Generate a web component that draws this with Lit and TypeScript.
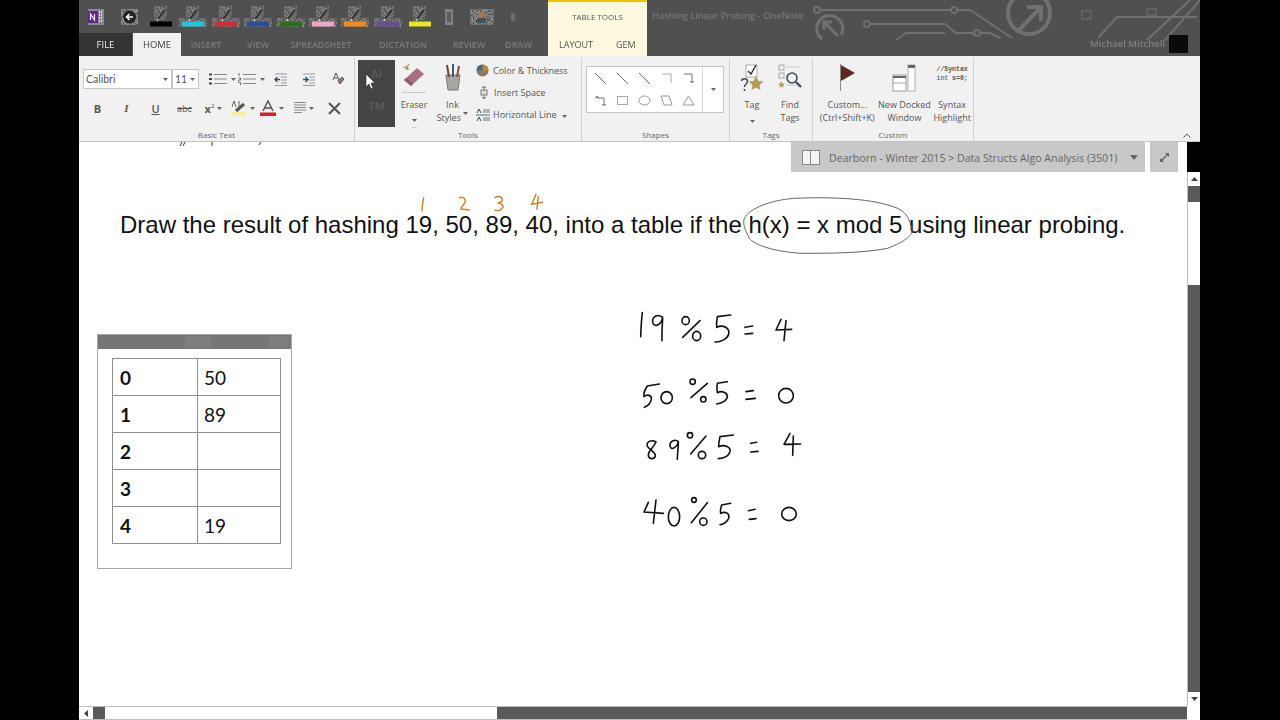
import { LitElement, css, html, svg } from 'lit';
import { customElement } from 'lit/decorators.js';

const PENS = [
  { color: '#000000', edge: false },
  { color: '#25c3de', edge: true },
  { color: '#c92f3a', edge: true },
  { color: '#2b4f96', edge: true },
  { color: '#2f6b1f', edge: true },
  { color: '#eca6c6', edge: true },
  { color: '#f08a1c', edge: true },
  { color: '#6a4f8f', edge: true },
  { color: '#e8e81e', edge: false },
];

const GHOST_TABS = [
  { label: 'INSERT', width: 50 },
  { label: 'VIEW', width: 54 },
  { label: 'SPREADSHEET', width: 72 },
  { label: 'DICTATION', width: 92 },
  { label: 'REVIEW', width: 40 },
  { label: 'DRAW', width: 59 },
];

const HASH_ROWS = [
  ['0', '50'],
  ['1', '89'],
  ['2', ''],
  ['3', ''],
  ['4', '19'],
];

const caret = html`<svg class="caret" width="5" height="3" viewBox="0 0 5 3"><path d="M0 0h5L2.500 3z" fill="#666" /></svg>`;

const pen = (color: string, edge: boolean) => html`
  <svg width="30" height="22" viewBox="0 0 30 22">
    <g opacity=".45">
      <path d="M8 0h13v14H8z" fill="#999" filter="url(#grain)" />
      ${edge ? svg`<rect x="1" y="12" width="28" height="9" fill="#999" filter="url(#grain)" />` : ''}
    </g>
    <path d="M12 13l7-9" stroke="#2e2e2e" stroke-width="1.800" />
    <path d="M12 13l-1 2" stroke="#ddd" stroke-width="1.200" />
    <rect x="4" y="15.500" width="22" height="5" fill=${color} />
  </svg>
`;

// hand written working on the right of the page, coordinates at 3x
const INK = [
  'M67 38C64 60 63 85 62 110',
  'M128 52C112 40 96 50 98 66C100 82 122 80 128 52C127 80 125 100 126 122',
  'M240 62L188 112M332 45L292 50C290 62 289 72 290 82C310 72 330 85 326 102C322 118 300 127 285 126',
  'M375 82L398 78M375 102L398 100M483 58L468 90L515 88M498 62L492 122',
  'M118 252L82 258C74 270 70 280 72 290C82 282 96 285 94 298C92 310 82 318 73 322',
  'M262 250L213 293M322 245L292 250C290 260 290 268 292 278C308 270 324 280 322 292C318 305 305 310 290 312',
  'M378 275L400 272M378 298L406 295',
  'M108 426C95 418 78 425 82 438C86 450 108 455 106 468C102 480 85 478 85 465C85 450 100 445 108 426',
  'M175 425C165 415 148 425 150 438C152 452 170 445 175 425C175 445 172 460 172 478',
  'M258 408L212 462M340 405L300 410C298 420 296 430 296 440C315 432 333 442 330 455C326 468 310 475 295 476',
  'M392 430L410 427M392 456L414 454M510 400L492 433L542 432M520 408L518 466',
  'M85 607L72 636L130 640M108 600L100 670',
  'M262 608L214 668M332 610L305 615C302 625 300 632 302 640C318 632 330 642 326 655C320 668 312 672 300 674',
  'M385 632L405 628M388 658L408 656',
];

const INK_LOOPS = [
  [197, 62, 11, 12], [230, 108, 12, 14],
  [140, 293, 17, 18], [218, 245, 8, 8], [250, 298, 8, 8], [498, 287, 22, 22],
  [210, 406, 8, 8], [246, 465, 11, 11],
  [162, 650, 17, 28], [222, 600, 7, 7], [250, 665, 11, 11], [507, 642, 22, 20],
];

@customElement('app-root')
export class AppRoot extends LitElement {
  static styles = css`
    :host {
      background: #000;
      display: block;
      font-family: 'Open Sans', 'Liberation Sans', sans-serif;
      height: 720px;
      overflow: hidden;
      width: 1280px;
    }

    .window {
      display: flex;
      filter: blur(0.3px);
      flex-direction: column;
      height: 720px;
      margin-left: 79px;
      width: 1121px;
    }

    .defs {
      height: 0;
      position: absolute;
      width: 0;
    }

    /* title bar */
    .titlebar {
      background: #505050;
      display: flex;
      flex: none;
      height: 56px;
    }

    .title-left {
      display: flex;
      flex-direction: column;
      width: 469px;
    }

    .qat {
      align-items: center;
      display: flex;
      height: 33px;
      padding-left: 8px;
    }

    .qat svg {
      flex: none;
    }

    .pens {
      display: flex;
      gap: 2.400px;
      margin-left: 7px;
      margin-top: 1px;
    }

    .tabs {
      display: flex;
      height: 23px;
    }

    .tab {
      align-items: center;
      display: flex;
      font-size: 9.500px;
      justify-content: center;
    }

    .tab-file {
      background: #333;
      color: #eee;
      margin-right: 1px;
      width: 53px;
    }

    .tab-home {
      background: #f1f1f1;
      color: #444;
      width: 48px;
    }

    .tab-ghost {
      color: #7a7a7a;
      font-size: 9px;
      font-weight: 600;
      white-space: nowrap;
    }

    .table-tools {
      background: #fdf9df;
      border-top: 2px solid #e6c700;
      color: #555;
      display: flex;
      flex-direction: column;
      width: 99px;
    }

    .table-tools-title {
      font-size: 8px;
      height: 29px;
      line-height: 29px;
      text-align: center;
    }

    .table-tools-tabs {
      display: flex;
      font-size: 9px;
      padding-top: 7px;
    }

    .table-tools-tabs span:first-child {
      margin-left: 11px;
      margin-right: 23px;
    }

    .title-deco {
      flex: 1;
      position: relative;
    }

    .title-deco svg {
      inset: 0;
      position: absolute;
    }

    .doc-title {
      color: #808080;
      font-size: 9.500px;
      left: 5px;
      position: absolute;
      top: 9px;
      white-space: nowrap;
    }

    .account {
      color: #808080;
      font-size: 9.500px;
      font-weight: 600;
      position: absolute;
      right: 35px;
      top: 37px;
    }

    .account-pic {
      background: #0a0a0a;
      height: 18px;
      position: absolute;
      right: 12px;
      top: 35px;
      width: 19px;
    }

    /* ribbon */
    .ribbon {
      background: #f1f1f1;
      border-bottom: 1px solid #c4c4c4;
      box-sizing: border-box;
      color: #555;
      display: flex;
      flex: none;
      font-size: 9px;
      height: 86px;
      position: relative;
    }

    .group {
      border-right: 1px solid #d0d0d0;
      box-sizing: border-box;
      display: flex;
      flex-direction: column;
      height: 84px;
      margin-top: 2px;
    }

    .group-body {
      display: flex;
      flex: none;
      height: 71px;
    }

    .group-label {
      color: #666;
      font-size: 8px;
      height: 13px;
      line-height: 12px;
      text-align: center;
    }

    .basic {
      width: 276px;
    }

    .tools {
      width: 227px;
    }

    .shapes {
      width: 148px;
    }

    .tags {
      width: 83px;
    }

    .custom {
      width: 161px;
    }

    .basic-body {
      box-sizing: border-box;
      flex-direction: column;
      padding: 11px 0 0 4px;
    }

    .font-row {
      align-items: center;
      display: flex;
      height: 20px;
    }

    .combo {
      align-items: center;
      background: #fff;
      border: 1px solid #c6c6c6;
      box-sizing: border-box;
      color: #555;
      display: flex;
      font-family: 'Lato', sans-serif;
      font-size: 10.500px;
      height: 20px;
      justify-content: space-between;
      padding: 0 3px 0 2px;
    }

    .combo-font {
      width: 91px;
    }

    .combo-size {
      margin-right: 8px;
      width: 27px;
    }

    .mini {
      align-items: center;
      display: flex;
      gap: 3px;
      justify-content: center;
    }

    .format-row {
      display: grid;
      grid-template-columns: repeat(9, 29px);
      margin-top: 10px;
    }

    .format-row .mini {
      color: #555;
      font-size: 11px;
      font-weight: 700;
      height: 18px;
    }

    .lasso {
      align-items: center;
      background: #444;
      box-sizing: border-box;
      color: #595959;
      display: flex;
      flex-direction: column;
      font-size: 11px;
      font-weight: 700;
      gap: 17px;
      height: 67px;
      margin: 2px 2px 0 3px;
      padding-top: 6px;
      width: 37px;
    }

    .big {
      align-items: center;
      display: flex;
      flex-direction: column;
      line-height: 13px;
      padding-top: 5px;
      text-align: center;
      white-space: nowrap;
    }

    .big svg {
      flex: none;
      margin-bottom: 6px;
    }

    .eraser {
      width: 34px;
    }

    .eraser svg {
      border-bottom: 1px solid #c8c8c8;
      margin-bottom: 5px;
      padding-bottom: 5px;
    }

    .inkstyles {
      margin-left: 3px;
      width: 37px;
    }

    .ink-label {
      margin-top: 1px;
    }

    .ink-options {
      display: flex;
      flex-direction: column;
      gap: 5px;
      margin-left: 5px;
      padding-top: 4px;
    }

    .ink-option {
      align-items: center;
      display: flex;
      gap: 4px;
      height: 17px;
      white-space: nowrap;
    }

    .gallery {
      background: #fff;
      border: 1px solid #c6c6c6;
      box-sizing: border-box;
      display: flex;
      height: 47px;
      margin: 8px 0 0 4px;
      width: 138px;
    }

    .gallery-grid {
      display: grid;
      flex: 1;
      grid-template-columns: repeat(5, 1fr);
      padding: 1px 2px;
    }

    .gallery-grid svg {
      margin: auto;
    }

    .gallery-more {
      align-items: center;
      border-left: 1px solid #d8d8d8;
      display: flex;
      justify-content: center;
      width: 20px;
    }

    .tag-btn {
      width: 38px;
    }

    .tags-body {
      padding-left: 3px;
    }

    .custom-body {
      padding-left: 4px;
    }

    .custom-body .big:nth-child(1) {
      width: 61px;
    }

    .custom-body .big:nth-child(2) {
      width: 54px;
    }

    .custom-body .big:nth-child(3) {
      width: 42px;
    }

    .syntax {
      box-sizing: border-box;
      color: #555;
      font-family: 'Liberation Mono', monospace;
      font-size: 6.500px;
      font-weight: 700;
      height: 29px;
      line-height: 9px;
      margin-bottom: 6px;
      padding-top: 2px;
      text-align: left;
    }

    .syntax b {
      color: #6e7fa8;
    }

    .collapse {
      bottom: 3px;
      position: absolute;
      right: 9px;
    }

    .cursor {
      left: 286px;
      position: absolute;
      top: 17px;
    }

    /* page */
    .stage {
      display: grid;
      flex: 1;
      grid-template-columns: 1fr 13px;
      grid-template-rows: 1fr 14px;
      min-height: 0;
    }

    .page {
      background: #fff;
      overflow: hidden;
      position: relative;
    }

    .notebook {
      align-items: center;
      background: #c8c8c8;
      color: #666;
      display: flex;
      font-size: 10.600px;
      height: 30px;
      left: 712px;
      position: absolute;
      top: 0;
      width: 354px;
    }

    .notebook svg:first-child {
      margin: 0 9px 0 11px;
    }

    .notebook span {
      padding-top: 1px;
      white-space: nowrap;
      width: 293px;
    }

    .expand {
      align-items: center;
      background: #c8c8c8;
      display: flex;
      height: 30px;
      justify-content: center;
      left: 1071px;
      position: absolute;
      top: 0;
      width: 28px;
    }

    .question {
      color: #111;
      font-family: 'Liberation Sans', Arial, sans-serif;
      font-size: 24px;
      left: 41px;
      line-height: 26px;
      position: absolute;
      top: 70px;
      white-space: nowrap;
    }

    .overlay {
      position: absolute;
    }

    .note {
      background: #fff;
      border: 1px solid #a8a8a8;
      box-sizing: border-box;
      height: 235px;
      left: 18px;
      position: absolute;
      top: 192px;
      width: 195px;
    }

    .note-head {
      background: #767676;
      display: flex;
      gap: 58px;
      height: 14px;
      justify-content: flex-end;
      padding-right: 2px;
    }

    .note-head i {
      background: #7e7e7e;
      display: block;
      height: 12px;
      margin-top: 1px;
    }

    .note-head i:first-child {
      width: 26px;
    }

    .note-head i:last-child {
      width: 20px;
    }

    table {
      border-collapse: collapse;
      font-family: 'Lato', 'Liberation Sans', sans-serif;
      font-size: 19px;
      margin: 9px 0 0 14px;
      table-layout: fixed;
      width: 169px;
    }

    td {
      border: 1px solid #8e8e8e;
      box-sizing: border-box;
      color: #111;
      height: 37px;
      padding: 0 0 0 6px;
    }

    td:first-child {
      font-weight: 700;
      padding-left: 7px;
      width: 85px;
    }

    /* scrollbars */
    .vbar {
      background: #fff;
      border-left: 1px solid #bdbdbd;
      box-sizing: border-box;
      display: flex;
      flex-direction: column;
      margin-top: 30px;
    }

    .vbar-btn {
      align-items: center;
      display: flex;
      flex: none;
      height: 14px;
      justify-content: center;
    }

    .thumb {
      background: #5a5a5a;
      flex: none;
    }

    .vbar-top {
      height: 16px;
    }

    .vbar-gap {
      flex: none;
      height: 83px;
    }

    .vbar-rest {
      flex: 1;
    }

    .hbar {
      background: #fff;
      border-bottom: 1px solid #bdbdbd;
      border-top: 1px solid #bdbdbd;
      box-sizing: border-box;
      display: flex;
    }

    .hbar-btn {
      align-items: center;
      display: flex;
      flex: none;
      justify-content: center;
      width: 14px;
    }

    .hbar-left {
      flex: none;
      width: 12px;
    }

    .hbar-gap {
      flex: none;
      width: 392px;
    }

    .hbar-rest {
      flex: 1;
    }

    .corner {
      background: #fff;
    }
  `;

  private renderTitleBar() {
    return html`
      <div class="titlebar">
        <div class="title-left">
          <div class="qat">
            <svg width="18" height="18" viewBox="0 0 18 18">
              <rect x="1" y="1" width="16" height="16" fill="#8d8794" />
              <rect x="1" y="3" width="10" height="12" fill="#5b2b7d" />
              <path d="M3.500 12V6l4 6V6" stroke="#f0e8f4" stroke-width="1.200" fill="none" />
              <path d="M12.500 3v12M14.500 3v12" stroke="#ddd" stroke-dasharray="2 1" />
            </svg>
            <svg style="margin-left:15px" width="19" height="18" viewBox="0 0 19 18">
              <rect x="1" y="1" width="17" height="16" fill="#aaa" filter="url(#grain)" opacity=".7" />
              <circle cx="9.500" cy="9" r="6.500" fill="#222" />
              <path d="M13 9H7M9.500 6L6.500 9l3 3" stroke="#fff" stroke-width="1.500" fill="none" />
            </svg>
            <div class="pens">${PENS.map((p) => pen(p.color, p.edge))}</div>
            <svg style="margin-left:8px" width="12" height="18" viewBox="0 0 12 18">
              <rect x="2" y="1" width="8" height="16" fill="#808080" />
              <rect x="4" y="4" width="4" height="10" fill="#5c5c5c" />
            </svg>
            <svg style="margin-left:14px" width="26" height="20" viewBox="0 0 26 20">
              <rect x="1" y="2" width="24" height="16" fill="#999" filter="url(#grain)" opacity=".6" />
              <circle cx="12" cy="8" r="3" fill="#a8744a" />
              <rect x="8" y="11" width="9" height="5" fill="#44505c" />
            </svg>
            <svg style="margin-left:14px" width="8" height="10" viewBox="0 0 8 10">
              <rect x="2" y="1" width="4" height="8" fill="#6c6c6c" />
            </svg>
          </div>
          <div class="tabs">
            <div class="tab tab-file">FILE</div>
            <div class="tab tab-home">HOME</div>
            ${GHOST_TABS.map(
              (t) => html`<div class="tab tab-ghost" style="width:${t.width}px">${t.label}</div>`,
            )}
          </div>
        </div>
        <div class="table-tools">
          <div class="table-tools-title">TABLE TOOLS</div>
          <div class="table-tools-tabs"><span>LAYOUT</span><span>GEM</span></div>
        </div>
        <div class="title-deco">
          <svg width="553" height="56" viewBox="647 0 553 56" fill="none" stroke="#707070" stroke-width="2">
            <circle cx="817" cy="10" r="3" />
            <path d="M820 10H951" />
            <circle cx="954" cy="10" r="3" />
            <path d="M957 10H970L1012 38" />
            <circle cx="867" cy="24" r="3" />
            <path d="M870 24H945L956 33H974" />
            <circle cx="977" cy="33" r="3" />
            <path d="M980 33H990L1000 38" />
            <path d="M896 40L906 33H945" />
            <path d="M841 35A13 13 0 1 0 822 39" stroke-width="3" />
            <path d="M838 36L824 22M824 30V22H832" stroke-width="3" />
            <circle cx="1029" cy="13" r="21" stroke-width="4" />
            <path d="M1019 30L1040 8M1027 7H1041V21" stroke-width="4" />
            <path d="M1098 38L1117 17H1197M1147 40L1190 0M1165 40L1200 0" />
            <rect x="1082" y="11" width="9" height="8" stroke-width="1" />
            <rect x="1147" y="9" width="9" height="6" stroke-width="1" />
          </svg>
          <div class="doc-title">Hashing Linear Probing - OneNote</div>
          <div class="account">Michael Mitchell</div>
          <div class="account-pic"></div>
        </div>
      </div>
    `;
  }

  private renderBasicText() {
    return html`
      <div class="group basic">
        <div class="group-body basic-body">
          <div class="font-row">
            <div class="combo combo-font">Calibri ${caret}</div>
            <div class="combo combo-size">11 ${caret}</div>
            <div class="mini" style="width:31px">
              <svg width="20" height="14" viewBox="0 0 20 14" stroke="#888" fill="none">
                <path d="M6 2.500h13M6 7h13M6 11.500h13" />
                <path d="M1 2.500h3M1 7h3M1 11.500h3" stroke="#444" stroke-width="2" />
              </svg>
              ${caret}
            </div>
            <div class="mini" style="width:30px">
              <svg width="20" height="14" viewBox="0 0 20 14" stroke="#888" fill="none">
                <path d="M6 2.500h13M6 7h13M6 11.500h13" />
                <path d="M2 1v3M1.500 6h2v2h-2v1.500M1.500 10.500h2v2.500" stroke="#667" />
              </svg>
              ${caret}
            </div>
            <div class="mini" style="width:30px">
              <svg width="14" height="13" viewBox="0 0 14 13" stroke="#999" fill="none">
                <path d="M1 1h12M7 4h6M7 7h6M7 10h6M1 12.500h12" />
                <path d="M6 6.500H1M3.500 4L1 6.500 3.500 9" stroke="#33506a" stroke-width="1.300" />
              </svg>
            </div>
            <div class="mini" style="width:28px">
              <svg width="14" height="13" viewBox="0 0 14 13" stroke="#999" fill="none">
                <path d="M1 1h12M7 4h6M7 7h6M7 10h6M1 12.500h12" />
                <path d="M1 6.500h5M3.500 4L6 6.500 3.500 9" stroke="#33506a" stroke-width="1.300" />
              </svg>
            </div>
            <div class="mini" style="width:32px">
              <svg width="13" height="14" viewBox="0 0 13 14" fill="none" stroke="#555">
                <path d="M1 8L4 1l3 7M2 6h4" />
                <path d="M6 9l4-4 2 2-4 5z" fill="#a07a88" />
              </svg>
            </div>
          </div>
          <div class="format-row">
            <div class="mini">B</div>
            <div class="mini" style="font-family:'Liberation Serif',serif;font-style:italic">I</div>
            <div class="mini" style="font-weight:600;text-decoration:underline">U</div>
            <div class="mini" style="font-size:9px;font-weight:400;text-decoration:line-through">abc</div>
            <div class="mini">
              <span>x<sup style="font-size:6px;font-weight:400">2</sup></span>${caret}
            </div>
            <div class="mini">
              <svg width="17" height="16" viewBox="0 0 17 16" fill="none">
                <rect x="1" y="12" width="15" height="4" fill="#f3f29a" />
                <path d="M6 11l8-7" stroke="#555" stroke-width="3" />
                <path d="M2 7L4 1l2 6M9 1v6" stroke="#666" />
              </svg>
              ${caret}
            </div>
            <div class="mini">
              <svg width="16" height="16" viewBox="0 0 16 16" fill="none">
                <path d="M3 11L8 1l5 10M4.500 8h7" stroke="#555" stroke-width="1.500" />
                <rect y="12.500" width="16" height="3.500" fill="#dd1c22" />
              </svg>
              ${caret}
            </div>
            <div class="mini" style="padding-left:6px">
              <svg width="12" height="14" viewBox="0 0 12 14" stroke="#888"><path d="M0 1.500h12M0 4h12M0 6.500h12M0 9h12M0 11.500h8" /></svg>
              ${caret}
            </div>
            <div class="mini" style="padding-left:10px">
              <svg width="13" height="13" viewBox="0 0 13 13" stroke="#555" stroke-width="2"><path d="M1 1l11 11M12 1L1 12" /></svg>
            </div>
          </div>
        </div>
        <div class="group-label">Basic Text</div>
      </div>
    `;
  }

  private renderTools() {
    return html`
      <div class="group tools">
        <div class="group-body">
          <div class="lasso">
            <span>AI</span>
            <span>TM</span>
          </div>
          <div class="big eraser">
            <svg width="24" height="24" viewBox="0 0 24 24">
              <path d="M2 17L15 5l7 6-13 12z" fill="#a86f84" />
              <path d="M2 17l7 6 2-2-7-6z" fill="#8c5a6c" />
              <path d="M4 2l2 5M1 4l6 2M7 1L4 7" stroke="#8a9a4a" />
            </svg>
            Eraser<span style="margin-top:8px">${caret}</span>
          </div>
          <div class="big inkstyles">
            <svg width="18" height="28" viewBox="0 0 18 28" fill="none">
              <path d="M2 12h14l-2 15H4z" fill="#a8a8a0" stroke="#777" />
              <path d="M5 14L3 2" stroke="#6a4a30" stroke-width="2" />
              <path d="M9 14V1" stroke="#3a5a7a" stroke-width="2" />
              <path d="M13 14l2-11" stroke="#8a5030" stroke-width="2" />
            </svg>
            <span class="ink-label">Ink</span>
            <span>Styles ${caret}</span>
          </div>
          <div class="ink-options">
            <div class="ink-option">
              <svg width="13" height="13" viewBox="0 0 13 13">
                <circle cx="6.500" cy="6.500" r="6" fill="#8a7a68" />
                <path d="M6.500 6.500V.5A6 6 0 0 1 12.500 6.500z" fill="#c9833a" />
                <path d="M6.500 6.500H.5A6 6 0 0 1 6.500.5z" fill="#3f6a8a" />
              </svg>
              Color &amp; Thickness
            </div>
            <div class="ink-option" style="padding-left:4px">
              <svg width="8" height="15" viewBox="0 0 8 15" fill="none" stroke="#777">
                <rect x="1" y="5" width="6" height="5" fill="#ddd" />
                <path d="M4 5V1M2 3l2-2 2 2M4 10v4M2 12l2 2 2-2" />
              </svg>
              <span style="margin-left:2px">Insert Space</span>
            </div>
            <div class="ink-option" style="gap:3px">
              <svg width="14" height="14" viewBox="0 0 14 14" fill="none">
                <path d="M0 7h14" stroke="#3a6a9a" />
                <path d="M1 5l2-4 2 4M1 13l2-4 2 4" stroke="#445" />
                <path d="M7 2h7M7 4h7M7 10h7M7 12h7" stroke="#777" />
              </svg>
              Horizontal Line <span style="margin-left:2px">${caret}</span>
            </div>
          </div>
        </div>
        <div class="group-label">Tools</div>
      </div>
    `;
  }

  private renderShapes() {
    const line = svg`<path d="M1 1l11 11" stroke="#666" />`;
    return html`
      <div class="group shapes">
        <div class="group-body">
          <div class="gallery">
            <div class="gallery-grid">
              <svg width="13" height="13" viewBox="0 0 13 13">${line}</svg>
              <svg width="13" height="13" viewBox="0 0 13 13">${line}</svg>
              <svg width="13" height="13" viewBox="0 0 13 13">${line}</svg>
              <svg width="13" height="13" viewBox="0 0 13 13" fill="none"><path d="M2 2h9v9" stroke="#aaa" /></svg>
              <svg width="13" height="13" viewBox="0 0 13 13" fill="none"><path d="M2 2h8v9M8 9l2 2 2-2" stroke="#777" /></svg>
              <svg width="13" height="13" viewBox="0 0 13 13" fill="none"><path d="M1 4l2-2 2 2M3 2v2h7v8M8 10l2 2 2-2" stroke="#777" /></svg>
              <svg width="13" height="13" viewBox="0 0 13 13" fill="none"><rect x="1.500" y="2.500" width="10" height="8" stroke="#aaa" /></svg>
              <svg width="13" height="13" viewBox="0 0 13 13" fill="none"><ellipse cx="6.500" cy="6.500" rx="5.500" ry="4.500" stroke="#999" /></svg>
              <svg width="13" height="13" viewBox="0 0 13 13" fill="none"><path d="M1 2h8l3 9H4z" stroke="#999" /></svg>
              <svg width="13" height="13" viewBox="0 0 13 13" fill="none"><path d="M6.500 2L12 11H1z" stroke="#999" /></svg>
            </div>
            <div class="gallery-more">${caret}</div>
          </div>
        </div>
        <div class="group-label">Shapes</div>
      </div>
    `;
  }

  private renderTags() {
    return html`
      <div class="group tags">
        <div class="group-body tags-body">
          <div class="big tag-btn">
            <svg width="24" height="29" viewBox="0 0 24 29" fill="none">
              <rect x="6" y="2" width="11" height="12" fill="#fff" stroke="#aaa" />
              <path d="M8 8l3 3 5-9" stroke="#333" stroke-width="1.500" />
              <path d="M16 13l2.500 5 5 .5-4 3.500 1 5-4.500-2.500-4.500 2.500 1-5-4-3.500 5-.5z" fill="#b59a5a" />
              <path d="M1.500 18C2 15 7.500 15 7.500 18.500C7.500 21 4.500 21 4.500 24M4.500 26v2" stroke="#445" stroke-width="1.500" />
            </svg>
            Tag<span style="margin-top:8px">${caret}</span>
          </div>
          <div class="big tag-btn">
            <svg width="26" height="29" viewBox="0 0 26 29" fill="none">
              <path d="M9 4h15M9 12h2M9 22h15" stroke="#ccc" />
              <rect x="2" y="2" width="5" height="5" stroke="#aaa" />
              <rect x="2" y="10" width="5" height="5" stroke="#aaa" />
              <path d="M4.500 18l1 2.500 2.500.2-2 1.600.7 2.500-2.200-1.400-2.200 1.400.7-2.500-2-1.600 2.500-.2z" fill="#b59a5a" />
              <circle cx="15" cy="15" r="5" stroke="#3d4a55" stroke-width="1.600" />
              <path d="M19 19l5 5" stroke="#3d4a55" stroke-width="2.200" />
            </svg>
            Find<br />Tags
          </div>
        </div>
        <div class="group-label">Tags</div>
      </div>
    `;
  }

  private renderCustom() {
    return html`
      <div class="group custom">
        <div class="group-body custom-body">
          <div class="big">
            <svg width="18" height="29" viewBox="0 0 18 29">
              <path d="M2.500 1v27" stroke="#8a8a8a" />
              <path d="M3 2l14 8-14 8z" fill="#5e2a20" />
            </svg>
            Custom...<br />(Ctrl+Shift+K)
          </div>
          <div class="big">
            <svg width="24" height="29" viewBox="0 0 24 29" fill="none">
              <rect x="16" y="2" width="7" height="26" fill="#fff" stroke="#b0b0b0" />
              <rect x="16" y="2" width="7" height="3" fill="#5a6a6a" />
              <rect x="1" y="12" width="13" height="16" fill="#fff" stroke="#999" />
              <path d="M1 14h13" stroke="#666" stroke-width="2" />
              <path d="M1 20h13" stroke="#aaa" />
            </svg>
            New Docked<br />Window
          </div>
          <div class="big">
            <div class="syntax">//Syntax<br /><b>int</b> s=0;</div>
            Syntax<br />Highlight
          </div>
        </div>
        <div class="group-label">Custom</div>
      </div>
    `;
  }

  private renderRibbon() {
    return html`
      <div class="ribbon">
        ${this.renderBasicText()} ${this.renderTools()} ${this.renderShapes()} ${this.renderTags()}
        ${this.renderCustom()}
        <svg class="collapse" width="8" height="5" viewBox="0 0 8 5" fill="none"><path d="M.5 4.500L4 1l3.500 3.500" stroke="#555" /></svg>
        <svg class="cursor" width="12" height="18" viewBox="0 0 12 18">
          <path d="M1 1v13l3-3 2 5 2-1-2-5h4z" fill="#fff" stroke="#222" stroke-width=".6" />
        </svg>
      </div>
    `;
  }

  private renderPage() {
    return html`
      <div class="page">
        <svg class="overlay" style="left:100px;top:0" width="90" height="5" viewBox="0 0 90 5" fill="none" stroke="#333">
          <path d="M3 0L1 4M6 0L4 4M33 0V4M82 0L80 3" />
        </svg>
        <div class="notebook">
          <svg width="18" height="15" viewBox="0 0 18 15" fill="#f4f4f4" stroke="#888">
            <rect x=".5" y=".5" width="8" height="14" />
            <rect x="8.500" y=".5" width="9" height="14" />
          </svg>
          <span>Dearborn - Winter 2015 &gt; Data Structs Algo Analysis (3501)</span>
          <svg style="margin-left:8px" width="8" height="5" viewBox="0 0 8 5"><path d="M0 0h8L4 5z" fill="#666" /></svg>
        </div>
        <div class="expand">
          <svg width="11" height="11" viewBox="0 0 11 11" fill="#666">
            <path d="M6 1h4v4L8.500 3.500 3.500 8.500 5 10H1V6l1.500 1.500 5-5z" />
          </svg>
        </div>

        <div class="question">Draw the result of hashing 19, 50, 89, 40, into a table if the h(x) = x mod 5 using linear probing.</div>
        <svg class="overlay" style="left:322px;top:43px" width="530" height="75" viewBox="0 0 1590 225" fill="none">
          <g stroke="#cc8434" stroke-width="4.500" stroke-linecap="round">
            <path d="M68 38C64 55 63 65 63 78" />
            <path d="M175 38C190 33 195 45 192 52C188 60 178 68 180 72L205 75" />
            <path d="M282 38C295 30 308 38 302 50L290 54C305 55 310 65 302 72C296 78 288 78 282 76" />
            <path d="M405 28L392 58L425 52M412 35L408 72" />
          </g>
          <path
            d="M1030 100C1045 70 1110 45 1180 40C1290 35 1420 40 1490 70C1520 85 1525 105 1532 130C1540 150 1510 170 1460 190C1380 205 1280 205 1200 205C1120 200 1060 180 1045 160C1030 130 1025 115 1030 100"
            stroke="#666"
            stroke-width="3"
          />
        </svg>

        <div class="note">
          <div class="note-head"><i></i><i></i></div>
          <table>
            ${HASH_ROWS.map(
              ([k, v]) => html`<tr><td>${k}</td><td>${v}</td></tr>`,
            )}
          </table>
        </div>

        <svg class="overlay" style="left:541px;top:158px" width="200" height="240" viewBox="0 0 600 720" fill="none" stroke="#111" stroke-width="4.800" stroke-linecap="round" stroke-linejoin="round">
          ${INK.map((d) => svg`<path d=${d} />`)}
          ${INK_LOOPS.map(([cx, cy, rx, ry]) => svg`<ellipse cx=${cx} cy=${cy} rx=${rx} ry=${ry} />`)}
        </svg>
      </div>
    `;
  }

  render() {
    return html`
      <svg class="defs" aria-hidden="true">
        <filter id="grain" x="0" y="0" width="100%" height="100%" color-interpolation-filters="sRGB">
          <feTurbulence type="fractalNoise" baseFrequency="0.7" numOctaves="2" seed="4" />
          <feColorMatrix type="matrix" values="1.300 0 0 0 -0.100 1.300 0 0 0 -0.100 1.300 0 0 0 -0.100 0 0 0 0 1" />
          <feComposite in2="SourceGraphic" operator="in" />
        </filter>
      </svg>
      <div class="window">
        ${this.renderTitleBar()} ${this.renderRibbon()}
        <div class="stage">
          ${this.renderPage()}
          <div class="vbar">
            <div class="vbar-btn"><svg width="7" height="4" viewBox="0 0 7 4"><path d="M0 4h7L3.500 0z" fill="#444" /></svg></div>
            <div class="thumb vbar-top"></div>
            <div class="vbar-gap"></div>
            <div class="thumb vbar-rest"></div>
            <div class="vbar-btn"><svg width="7" height="4" viewBox="0 0 7 4"><path d="M0 0h7L3.500 4z" fill="#444" /></svg></div>
          </div>
          <div class="hbar">
            <div class="hbar-btn"><svg width="4" height="7" viewBox="0 0 4 7"><path d="M4 0v7L0 3.500z" fill="#444" /></svg></div>
            <div class="thumb hbar-left"></div>
            <div class="hbar-gap"></div>
            <div class="thumb hbar-rest"></div>
          </div>
          <div class="corner"></div>
        </div>
      </div>
    `;
  }
}
